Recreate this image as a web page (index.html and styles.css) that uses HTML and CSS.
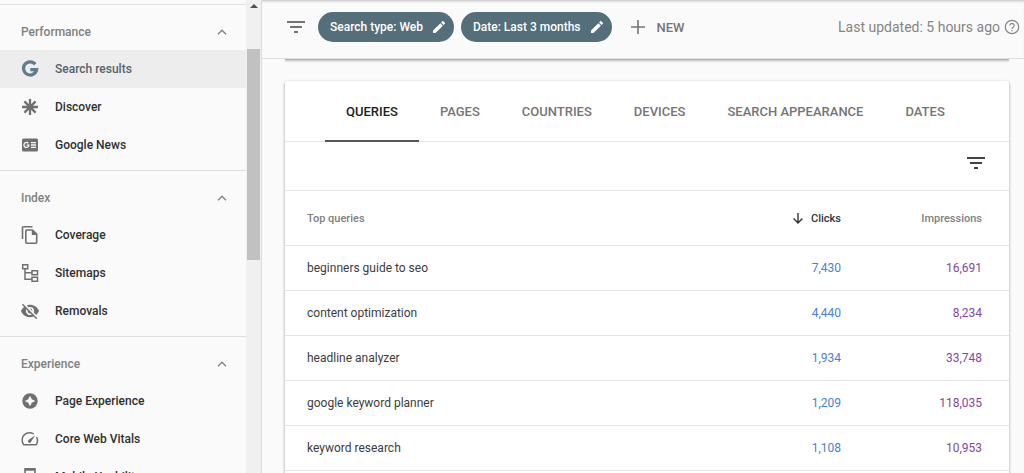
FILE: index.html
```html
<!DOCTYPE html>
<html lang="en">
<head>
<meta charset="utf-8">
<title>Search results</title>
<link rel="stylesheet" href="styles.css">
</head>
<body>
<svg class="defs" aria-hidden="true">
  <symbol id="chevron" viewBox="0 0 10 6"><path d="M1 5.2 5 1.2 9 5.2" fill="none" stroke="currentColor" stroke-width="1.3"/></symbol>
  <symbol id="filter" viewBox="0 0 18 12"><path d="M0 0h18v2H0zM3 5h12v2H3zM7 10h4v2H7z" fill="currentColor"/></symbol>
  <symbol id="pencil" viewBox="3 3 18 18"><path d="M3 17.25V21h3.75L17.81 9.94l-3.75-3.75L3 17.25zM20.71 7.04a1 1 0 0 0 0-1.41l-2.34-2.34a1 1 0 0 0-1.41 0l-1.83 1.83 3.75 3.75 1.83-1.83z" fill="currentColor"/></symbol>
</svg>
<div class="app">
  <div class="sidebar">
    <nav class="nav">
      <section class="group">
        <button class="group-title" aria-expanded="true">Performance<svg class="chevron"><use href="#chevron"/></svg></button>
        <a class="item active" href="#"><svg class="icon" viewBox="0 0 18 18"><path d="M14.3 4.300A6.600 6.600 0 1 0 15.600 9.600H9.300" fill="none" stroke="currentColor" stroke-width="3.200"/></svg>Search results</a>
        <a class="item" href="#"><svg class="icon" viewBox="0 0 18 18"><path d="M9 1v16M1 9h16M3.400 3.400l11.200 11.200M14.600 3.400 3.400 14.600" fill="none" stroke="currentColor" stroke-width="2.300"/></svg>Discover</a>
        <a class="item" href="#"><svg class="icon" viewBox="0 0 18 18"><rect x="1" y="2.500" width="16" height="13" rx="1.500" fill="currentColor"/><path d="M7.300 7.300A2.500 2.500 0 1 0 7.900 9.200H5.700M10 6.600h5M10 9h5M10 11.400h5" fill="none" stroke="#fafafa" stroke-width="1.300"/></svg>Google News</a>
      </section>
      <section class="group">
        <button class="group-title" aria-expanded="true">Index<svg class="chevron"><use href="#chevron"/></svg></button>
        <a class="item" href="#"><svg class="icon" viewBox="0 0 18 18"><path d="M1.500 13V1.800a1 1 0 0 1 1-1H11.500M5.800 4h5.700l4.200 4.200v8a1 1 0 0 1-1 1H5.800a1 1 0 0 1-1-1V5a1 1 0 0 1 1-1z" fill="none" stroke="currentColor" stroke-width="1.600"/><path d="M10.800 4v5h5z" fill="currentColor"/></svg>Coverage</a>
        <a class="item" href="#"><svg class="icon" viewBox="0 0 18 18"><path d="M1.700.7h5v4h-5zM11 6.700h5.500v4H11zM11 13.300h5.500v4H11zM4 4.700v10.600h7M4 8.700h7" fill="none" stroke="currentColor" stroke-width="1.500"/></svg>Sitemaps</a>
        <a class="item" href="#"><svg class="icon" viewBox="1 2 22 20"><path d="M12 7a5 5 0 0 1 5 5c0 .65-.13 1.260-.36 1.830l2.920 2.920A11.800 11.800 0 0 0 22.990 12C21.260 7.610 16.990 4.500 11.990 4.500c-1.400 0-2.740.25-3.980.7l2.160 2.160C10.740 7.130 11.350 7 12 7zM2 4.270l2.280 2.280.46.46A11.800 11.800 0 0 0 1 12c1.730 4.390 6 7.500 11 7.500 1.550 0 3.030-.3 4.380-.84l.42.42L19.730 22 21 20.730 3.270 3 2 4.270zM7.530 9.800l1.550 1.550A2.800 2.800 0 0 0 9 12a3 3 0 0 0 3 3c.22 0 .44-.03.65-.08l1.550 1.550A5 5 0 0 1 7 12c0-.79.2-1.530.53-2.200zm4.310-.78 3.150 3.150.02-.16a3 3 0 0 0-3-3l-.17.01z" fill="currentColor"/></svg>Removals</a>
      </section>
      <section class="group">
        <button class="group-title" aria-expanded="true">Experience<svg class="chevron"><use href="#chevron"/></svg></button>
        <a class="item" href="#"><svg class="icon" viewBox="0 0 18 18"><circle cx="9" cy="9" r="7.700" fill="currentColor"/><path d="M9 3.700 10.800 7.200 14.300 9l-3.500 1.800L9 14.300l-1.800-3.500L3.700 9l3.500-1.800z" fill="#fafafa"/></svg>Page Experience</a>
        <a class="item" href="#"><svg class="icon" viewBox="0 0 18 18"><path d="M12.700 4A7.400 7.400 0 0 0 2.800 14.800h12.400a7.400 7.400 0 0 0 .3-7.600" fill="none" stroke="currentColor" stroke-width="1.500"/><path d="M14.300 5.200 7.700 9.800a1.600 1.600 0 1 0 2.200 2.200z" fill="currentColor"/></svg>Core Web Vitals</a>
        <a class="item" href="#"><svg class="icon" viewBox="0 0 18 18"><path d="M4 .5h10v17H4zM4 2h10M4 15h10" fill="none" stroke="currentColor" stroke-width="1.600"/></svg>Mobile Usability</a>
      </section>
    </nav>
    <div class="scrollbar" aria-hidden="true"><div class="arrow"></div><div class="thumb"></div></div>
  </div>
  <main class="main">
    <header class="toolbar">
      <svg class="filter"><use href="#filter"/></svg>
      <div class="chips">
        <button class="chip">Search type: Web<svg class="pencil"><use href="#pencil"/></svg></button>
        <button class="chip">Date: Last 3 months<svg class="pencil"><use href="#pencil"/></svg></button>
      </div>
      <button class="new"><svg class="plus" viewBox="0 0 14 14"><path d="M7 0v14M0 7h14" stroke="currentColor" stroke-width="1.600"/></svg>NEW</button>
      <p class="updated">Last updated: 5 hours ago<svg class="help" viewBox="0 0 16 16"><circle cx="8" cy="8" r="6.700" fill="none" stroke="currentColor" stroke-width="1.200"/><path d="M5.900 6.500a2.100 2.100 0 1 1 3.300 1.700C8.400 8.700 8 9 8 9.900M8 10.900v1.300" fill="none" stroke="currentColor" stroke-width="1.200"/></svg></p>
    </header>
    <div class="content">
      <div class="chart-edge"></div>
      <section class="card">
        <div class="tabs" role="tablist">
          <button class="tab selected" role="tab" aria-selected="true">QUERIES</button>
          <button class="tab" role="tab">PAGES</button>
          <button class="tab" role="tab">COUNTRIES</button>
          <button class="tab" role="tab">DEVICES</button>
          <button class="tab" role="tab">SEARCH APPEARANCE</button>
          <button class="tab" role="tab">DATES</button>
        </div>
        <div class="table-tools"><button class="filter-button" aria-label="Filter rows"><svg class="filter"><use href="#filter"/></svg></button></div>
        <table class="queries">
          <thead>
            <tr><th>Top queries</th><th class="clicks"><svg class="sort" viewBox="0 0 10 11"><path d="M5 0v10M.6 5.600 5 10l4.400-4.400" fill="none" stroke="currentColor" stroke-width="1.400"/></svg>Clicks</th><th class="impressions">Impressions</th></tr>
          </thead>
          <tbody>
            <tr><td>beginners guide to seo</td><td class="clicks">7,430</td><td class="impressions">16,691</td></tr>
            <tr><td>content optimization</td><td class="clicks">4,440</td><td class="impressions">8,234</td></tr>
            <tr><td>headline analyzer</td><td class="clicks">1,934</td><td class="impressions">33,748</td></tr>
            <tr><td>google keyword planner</td><td class="clicks">1,209</td><td class="impressions">118,035</td></tr>
            <tr><td>keyword research</td><td class="clicks">1,108</td><td class="impressions">10,953</td></tr>
          </tbody>
        </table>
      </section>
    </div>
  </main>
</div>
</body>
</html>
```
FILE: styles.css
```css
* { box-sizing: border-box; }
body { margin: 0; font-family: Roboto, Arial, sans-serif; font-size: 12px; color: #3c4043; background: #fafafa; }
button { margin: 0; padding: 0; border: 0; background: none; font: inherit; color: inherit; cursor: pointer; }
svg { flex: none; }
.defs { display: none; }
.app { display: flex; height: 100vh; overflow: hidden; }

.sidebar { display: flex; flex: none; width: 262px; border-right: 1px solid #dcdcdc; }
.nav { flex: 1; padding-top: 4px; overflow: hidden; }
.group { padding-bottom: 6px; border-top: 1px solid #dedede; }
.group-title { display: flex; align-items: center; justify-content: space-between; width: 100%; height: 45px; padding: 8px 19px 0 21px; font-weight: 500; color: #808080; }
.chevron { width: 10px; height: 6px; }
.item { display: flex; align-items: center; gap: 16px; height: 38px; padding-left: 21px; font-weight: 500; color: #303030; text-decoration: none; }
.item.active { background: #ededed; color: #55626a; }
.icon { width: 18px; height: 18px; color: #707070; }
.active .icon { color: #607d8b; }

.scrollbar { display: flex; flex-direction: column; align-items: center; flex: none; width: 15px; padding-top: 4px; background: #f0f0f0; }
.arrow { border: 4px solid transparent; border-top: 0; border-bottom-color: #505050; }
.thumb { width: 13px; height: 45%; margin-top: 41px; background: #c1c1c1; }

.main { display: flex; flex: 1; flex-direction: column; min-width: 0; }
.toolbar { display: flex; align-items: center; flex: none; height: 59px; padding: 0 4px 4px 25px; border-bottom: 1px solid #dedede; box-shadow: inset 0 3px 3px -2px #bdbdbd; color: #757575; }
.filter { display: block; width: 18px; height: 12px; }
.chips { display: flex; gap: 7px; margin-left: 13px; }
.chip { display: flex; align-items: center; gap: 10px; height: 30px; padding: 0 9px 0 12px; border-radius: 15px; background: #546e7a; color: #fff; font-weight: 500; }
.pencil { width: 12px; height: 12px; }
.new { display: flex; align-items: center; gap: 12px; margin-left: 19px; font-size: 13px; font-weight: 500; }
.plus { width: 14px; height: 14px; }
.updated { display: flex; align-items: center; gap: 4px; margin: 0 0 0 auto; font-size: 14px; color: #858585; white-space: nowrap; }
.help { width: 16px; height: 16px; }

.content { flex: 1; padding: 0 15px 0 23px; overflow: hidden; }
.chart-edge { height: 1px; background: #b5b5b5; box-shadow: 0 1px 2px #999; }
.card { margin-top: 21px; padding-bottom: 24px; background: #fff; border-radius: 2px; box-shadow: 0 1px 3px rgba(0, 0, 0, .4); }
.tabs { display: flex; height: 61px; padding-left: 40px; border-bottom: 1px solid #e8e8e8; }
.tab { height: 61px; padding: 0 21px; font-size: 13px; font-weight: 500; color: #757575; white-space: nowrap; }
.tab.selected { border-bottom: 2px solid #555; padding-top: 2px; color: #212121; }
.table-tools { display: flex; align-items: center; justify-content: flex-end; height: 49px; padding: 0 24px 6px; border-bottom: 1px solid #e8e8e8; color: #424242; }
.queries { width: 100%; border-collapse: separate; border-spacing: 0; table-layout: fixed; }
.queries th { height: 55px; padding: 0; border-bottom: 1px solid #e4e4e4; font-size: 11px; font-weight: 500; text-align: left; color: #808080; }
.queries td { height: 45px; padding: 0; border-bottom: 1px solid #e4e4e4; color: #3c3c3c; }
.queries th:first-child, .queries td:first-child { padding-left: 22px; }
.queries .clicks { width: 141px; text-align: right; }
.queries .impressions { width: 168px; padding-right: 27px; text-align: right; }
.queries th.clicks { color: #333; }
.queries td.clicks { color: #4a7fd6; }
.queries td.impressions { color: #8546a0; }
.sort { width: 10px; height: 11px; margin-right: 8px; vertical-align: -2px; }
```
